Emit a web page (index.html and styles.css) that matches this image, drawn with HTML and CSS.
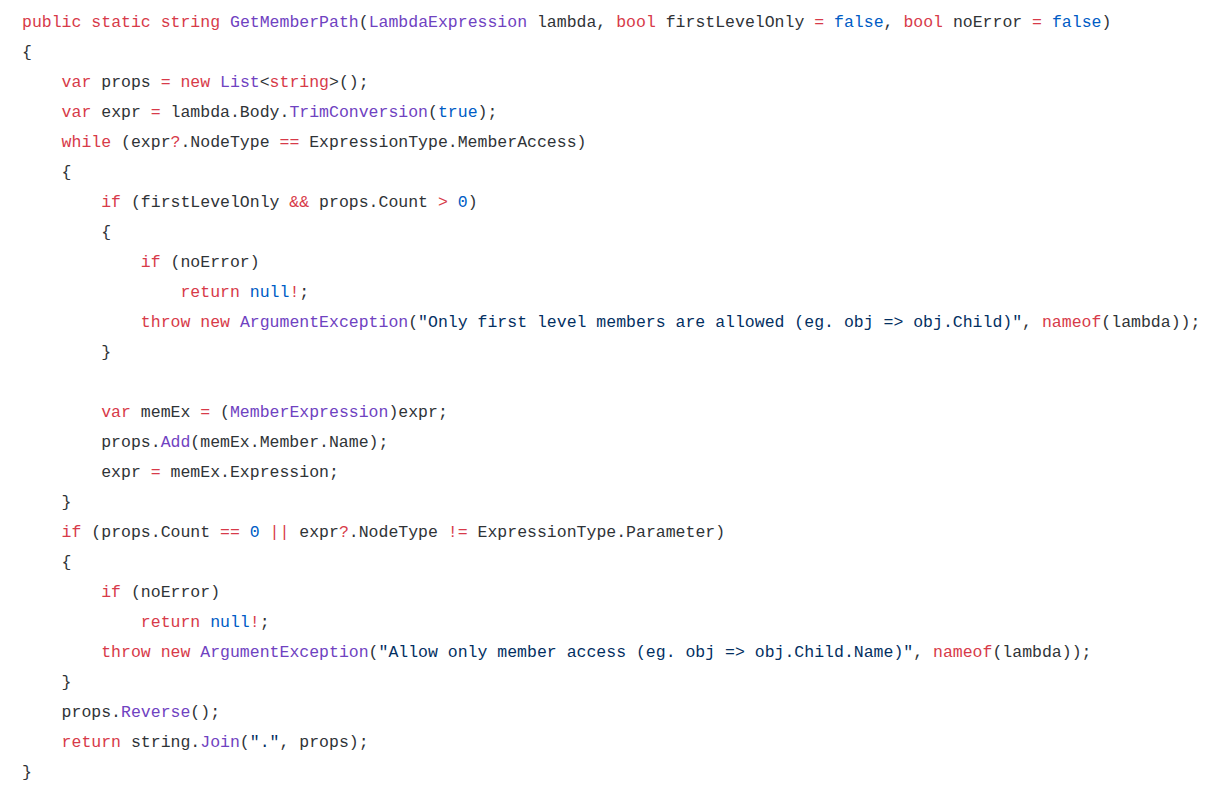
FILE: index.html
```html
<!DOCTYPE html>
<html>
<head>
<meta charset="utf-8">
<link rel="stylesheet" href="styles.css">
</head>
<body>
<pre class="code"><code class="src"><span class="k">public</span> <span class="k">static</span> <span class="k">string</span> <span class="f">GetMemberPath</span>(<span class="f">LambdaExpression</span> lambda, <span class="k">bool</span> firstLevelOnly <span class="k">=</span> <span class="c">false</span>, <span class="k">bool</span> noError <span class="k">=</span> <span class="c">false</span>)
{
    <span class="k">var</span> props <span class="k">=</span> <span class="k">new</span> <span class="f">List</span>&lt;<span class="k">string</span>&gt;();
    <span class="k">var</span> expr <span class="k">=</span> lambda.Body.<span class="f">TrimConversion</span>(<span class="c">true</span>);
    <span class="k">while</span> (expr<span class="k">?</span>.NodeType <span class="k">==</span> ExpressionType.MemberAccess)
    {
        <span class="k">if</span> (firstLevelOnly <span class="k">&amp;&amp;</span> props.Count <span class="k">&gt;</span> <span class="c">0</span>)
        {
            <span class="k">if</span> (noError)
                <span class="k">return</span> <span class="c">null</span><span class="k">!</span>;
            <span class="k">throw</span> <span class="k">new</span> <span class="f">ArgumentException</span>(<span class="s">"Only first level members are allowed (eg. obj =&gt; obj.Child)"</span>, <span class="k">nameof</span>(lambda));
        }

        <span class="k">var</span> memEx <span class="k">=</span> (<span class="f">MemberExpression</span>)expr;
        props.<span class="f">Add</span>(memEx.Member.Name);
        expr <span class="k">=</span> memEx.Expression;
    }
    <span class="k">if</span> (props.Count <span class="k">==</span> <span class="c">0</span> <span class="k">||</span> expr<span class="k">?</span>.NodeType <span class="k">!=</span> ExpressionType.Parameter)
    {
        <span class="k">if</span> (noError)
            <span class="k">return</span> <span class="c">null</span><span class="k">!</span>;
        <span class="k">throw</span> <span class="k">new</span> <span class="f">ArgumentException</span>(<span class="s">"Allow only member access (eg. obj =&gt; obj.Child.Name)"</span>, <span class="k">nameof</span>(lambda));
    }
    props.<span class="f">Reverse</span>();
    <span class="k">return</span> string.<span class="f">Join</span>(<span class="s">"."</span>, props);
}</code></pre>
</body>
</html>
```
FILE: styles.css
```css
html, body {
  margin: 0;
  padding: 0;
  background: #ffffff;
}
.code {
  margin: 0;
  padding: 8px 0 0 22px;
  font-family: "Liberation Mono", "DejaVu Sans Mono", monospace;
  font-size: 16.5px;
  line-height: 30px;
  color: #2f3337;
  white-space: pre;
}
.src {
  font-family: inherit;
  font-size: inherit;
  line-height: inherit;
}
.k { color: #d73a49; }
.f { color: #6f42c1; }
.c { color: #005cc5; }
.s { color: #032f62; }
```
